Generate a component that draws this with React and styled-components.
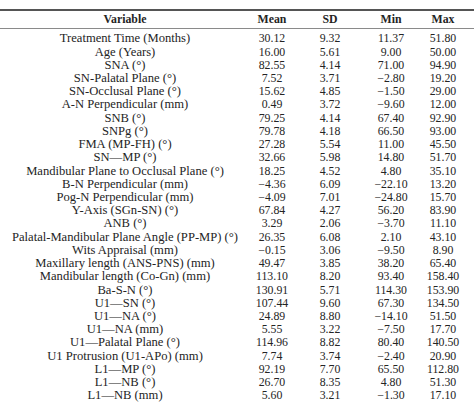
import React from "react";
import styled, { createGlobalStyle } from "styled-components";

const GlobalStyle = createGlobalStyle`
  html, body { margin: 0; padding: 0; background: #ffffff; }
  body { font-family: "Liberation Serif", "Times New Roman", serif; color: #242424; }
`;

const Page = styled.div`
  width: 474px;
  padding-top: 9px;
  box-sizing: border-box;
`;

const Table = styled.div`
  border-top: 2px solid #555555;
  width: 474px;
`;

const Row = styled.div`
  display: grid;
  grid-template-columns: 250px 44px 72px 50px 54px;
  font-size: 11.8px;
  line-height: ${(p) => (p.$head ? "17px" : "13.22px")};
  font-weight: ${(p) => (p.$head ? 700 : 400)};
  border-bottom: ${(p) => (p.$head ? "1px solid #8a8a8a" : "none")};
`;

const Body = styled.div`
  padding-top: 3.4px;
`;

const Cell = styled.div`
  text-align: center;
  white-space: nowrap;
`;

const Label = styled(Cell)`
  font-size: ${(p) => (p.$head ? "11.8px" : "12.6px")};
`;

const rows = [
  ["Treatment Time (Months)", "30.12", "9.32", "11.37", "51.80"],
  ["Age (Years)", "16.00", "5.61", "9.00", "50.00"],
  ["SNA (°)", "82.55", "4.14", "71.00", "94.90"],
  ["SN-Palatal Plane (°)", "7.52", "3.71", "−2.80", "19.20"],
  ["SN-Occlusal Plane (°)", "15.62", "4.85", "−1.50", "29.00"],
  ["A-N Perpendicular (mm)", "0.49", "3.72", "−9.60", "12.00"],
  ["SNB (°)", "79.25", "4.14", "67.40", "92.90"],
  ["SNPg (°)", "79.78", "4.18", "66.50", "93.00"],
  ["FMA (MP-FH) (°)", "27.28", "5.54", "11.00", "45.50"],
  ["SN—MP (°)", "32.66", "5.98", "14.80", "51.70"],
  ["Mandibular Plane to Occlusal Plane (°)", "18.25", "4.52", "4.80", "35.10"],
  ["B-N Perpendicular (mm)", "−4.36", "6.09", "−22.10", "13.20"],
  ["Pog-N Perpendicular (mm)", "−4.09", "7.01", "−24.80", "15.70"],
  ["Y-Axis (SGn-SN) (°)", "67.84", "4.27", "56.20", "83.90"],
  ["ANB (°)", "3.29", "2.06", "−3.70", "11.10"],
  ["Palatal-Mandibular Plane Angle (PP-MP) (°)", "26.35", "6.08", "2.10", "43.10"],
  ["Wits Appraisal (mm)", "−0.15", "3.06", "−9.50", "8.90"],
  ["Maxillary length (ANS-PNS) (mm)", "49.47", "3.85", "38.20", "65.40"],
  ["Mandibular length (Co-Gn) (mm)", "113.10", "8.20", "93.40", "158.40"],
  ["Ba-S-N (°)", "130.91", "5.71", "114.30", "153.90"],
  ["U1—SN (°)", "107.44", "9.60", "67.30", "134.50"],
  ["U1—NA (°)", "24.89", "8.80", "−14.10", "51.50"],
  ["U1—NA (mm)", "5.55", "3.22", "−7.50", "17.70"],
  ["U1—Palatal Plane (°)", "114.96", "8.82", "80.40", "140.50"],
  ["U1 Protrusion (U1-APo) (mm)", "7.74", "3.74", "−2.40", "20.90"],
  ["L1—MP (°)", "92.19", "7.70", "65.50", "112.80"],
  ["L1—NB (°)", "26.70", "8.35", "4.80", "51.30"],
  ["L1—NB (mm)", "5.60", "3.21", "−1.30", "17.10"],
];

export default function App() {
  return (
    <Page>
      <GlobalStyle />
      <Table>
        <Row $head>
          <Label $head>Variable</Label>
          <Cell>Mean</Cell>
          <Cell>SD</Cell>
          <Cell>Min</Cell>
          <Cell>Max</Cell>
        </Row>
        <Body>
          {rows.map(([label, ...vals]) => (
            <Row key={label}>
              <Label>{label}</Label>
              {vals.map((c, i) => (
                <Cell key={i}>{c}</Cell>
              ))}
            </Row>
          ))}
        </Body>
      </Table>
    </Page>
  );
}
